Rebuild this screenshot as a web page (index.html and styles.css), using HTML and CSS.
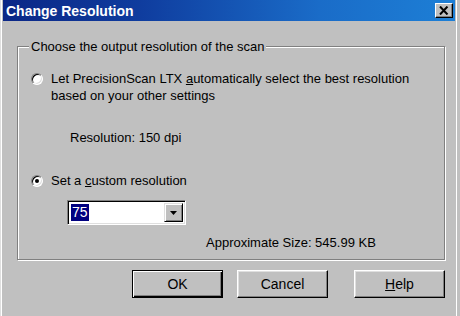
FILE: index.html
```html
<!DOCTYPE html>
<html>
<head>
<meta charset="utf-8">
<link rel="stylesheet" href="styles.css">
</head>
<body>
<div class="window">
  <div class="titlebar">
    <span class="title">Change Resolution</span>
    <span class="close">
      <svg width="10" height="9" viewBox="0 0 10 9"><path d="M1 0.5 L8.5 8.5 M8.5 0.5 L1 8.5" stroke="#000" stroke-width="2"/></svg>
    </span>
  </div>
  <div class="client">
    <div class="group">
      <span class="group-title">Choose the output resolution of the scan</span>
      <div class="option option-first">
        <span class="radio"></span>
        <span class="option-text">Let PrecisionScan LTX <u>a</u>utomatically select the best resolution<br>based on your other settings</span>
      </div>
      <div class="info">Resolution: 150 dpi</div>
      <div class="option option-second">
        <span class="radio checked"></span>
        <span class="option-text">Set a <u>c</u>ustom resolution</span>
      </div>
      <div class="combo">
        <span class="combo-value"><span class="sel">75</span></span>
        <span class="combo-btn">
          <svg width="7" height="4" viewBox="0 0 7 4"><path d="M0 0 H7 L3.5 4 Z" fill="#000"/></svg>
        </span>
      </div>
      <div class="size">Approximate Size: 545.99 KB</div>
    </div>
    <div class="buttons">
      <button class="btn default">OK</button>
      <button class="btn">Cancel</button>
      <button class="btn btn-help"><u>H</u>elp</button>
    </div>
  </div>
</div>
</body>
</html>
```
FILE: styles.css
```css
html, body {
  margin: 0;
  padding: 0;
  background: #c0c0c0;
}
body {
  width: 460px;
  height: 316px;
  overflow: hidden;
  font-family: "Liberation Sans", Arial, sans-serif;
  font-size: 13px;
  color: #000;
}
.window {
  box-sizing: border-box;
  width: 457px;
  height: 330px;
  border-left: 1px solid #dfdfdf;
  border-right: 1px solid #fff;
  box-shadow: inset 1px 0 #fff;
  padding: 0 1px 0 2px;
  background: #c0c0c0;
}
.titlebar {
  height: 21px;
  display: flex;
  align-items: center;
  justify-content: space-between;
  background: linear-gradient(to right, #0b2786 0%, #0f3c9e 30%, #1a6cc8 70%, #1d7fd6 100%);
  padding: 0 2px 0 3px;
}
.title {
  color: #fff;
  font-weight: bold;
  font-size: 14px;
}
.close {
  box-sizing: border-box;
  width: 18px;
  height: 15px;
  display: flex;
  align-items: center;
  justify-content: center;
  background: #c0c0c0;
  border-top: 1px solid #fff;
  border-left: 1px solid #fff;
  border-right: 1px solid #000;
  border-bottom: 1px solid #000;
  box-shadow: inset -1px -1px #808080;
}
.client {
  padding-top: 25px;
}
.group {
  box-sizing: border-box;
  margin-left: 14px;
  width: 428px;
  height: 214px;
  border: 1px solid #808080;
  box-shadow: inset 1px 1px #fff, 1px 1px #fff;
  padding-left: 13px;
}
.group-title {
  display: block;
  width: fit-content;
  margin-top: -8px;
  margin-left: -2px;
  padding: 0 2px;
  line-height: 15px;
  background: #c0c0c0;
}
.option {
  display: flex;
  align-items: flex-start;
  line-height: 17px;
}
.option-first {
  margin-top: 16px;
}
.option-second {
  margin-top: 26px;
}
.radio {
  box-sizing: border-box;
  flex: none;
  width: 12px;
  height: 12px;
  margin-top: 3px;
  margin-right: 8px;
  border-radius: 50%;
  background: #fff;
  border: 1px solid;
  border-color: #808080 #fff #fff #808080;
  box-shadow: inset 1px 1px #000, inset -1px -1px #dfdfdf;
  display: flex;
  align-items: center;
  justify-content: center;
}
.radio.checked::after {
  content: "";
  width: 4px;
  height: 4px;
  border-radius: 50%;
  background: #000;
}
.info {
  margin-top: 25px;
  margin-left: 39px;
  line-height: 17px;
}
.combo {
  box-sizing: border-box;
  margin-top: 11px;
  margin-left: 36px;
  width: 119px;
  height: 25px;
  display: flex;
  align-items: center;
  justify-content: space-between;
  background: #fff;
  border: 1px solid;
  border-color: #808080 #fff #fff #808080;
  box-shadow: inset 1px 1px #000, inset -1px -1px #dfdfdf;
  padding: 2px;
}
.combo-value {
  padding-left: 1px;
  font-size: 14px;
}
.sel {
  background: #000080;
  color: #fff;
  display: inline-block;
  line-height: 17px;
  padding: 0 1px;
}
.combo-btn {
  box-sizing: border-box;
  width: 19px;
  height: 19px;
  display: flex;
  align-items: center;
  justify-content: center;
  background: #c0c0c0;
  border-top: 1px solid #dfdfdf;
  border-left: 1px solid #dfdfdf;
  border-right: 1px solid #000;
  border-bottom: 1px solid #000;
  box-shadow: inset 1px 1px #fff, inset -1px -1px #808080;
}
.size {
  margin-top: 10px;
  margin-left: 175px;
  line-height: 16px;
}
.buttons {
  display: flex;
  margin-top: 10px;
  padding-left: 129px;
}
.btn {
  box-sizing: border-box;
  width: 91px;
  height: 28px;
  margin: 0;
  padding: 0;
  font-family: "Liberation Sans", Arial, sans-serif;
  font-size: 14px;
  color: #000;
  background: #c0c0c0;
  border-top: 1px solid #fff;
  border-left: 1px solid #fff;
  border-right: 1px solid #000;
  border-bottom: 1px solid #000;
  box-shadow: inset -1px -1px #808080, inset 1px 1px #dfdfdf;
  margin-right: 14px;
}
.btn.default {
  border: 1px solid #000;
  box-shadow: inset 1px 1px #fff, inset -1px -1px #000, inset -2px -2px #808080;
}
.btn-help {
  margin-left: 12px;
  margin-right: 0;
}
```
